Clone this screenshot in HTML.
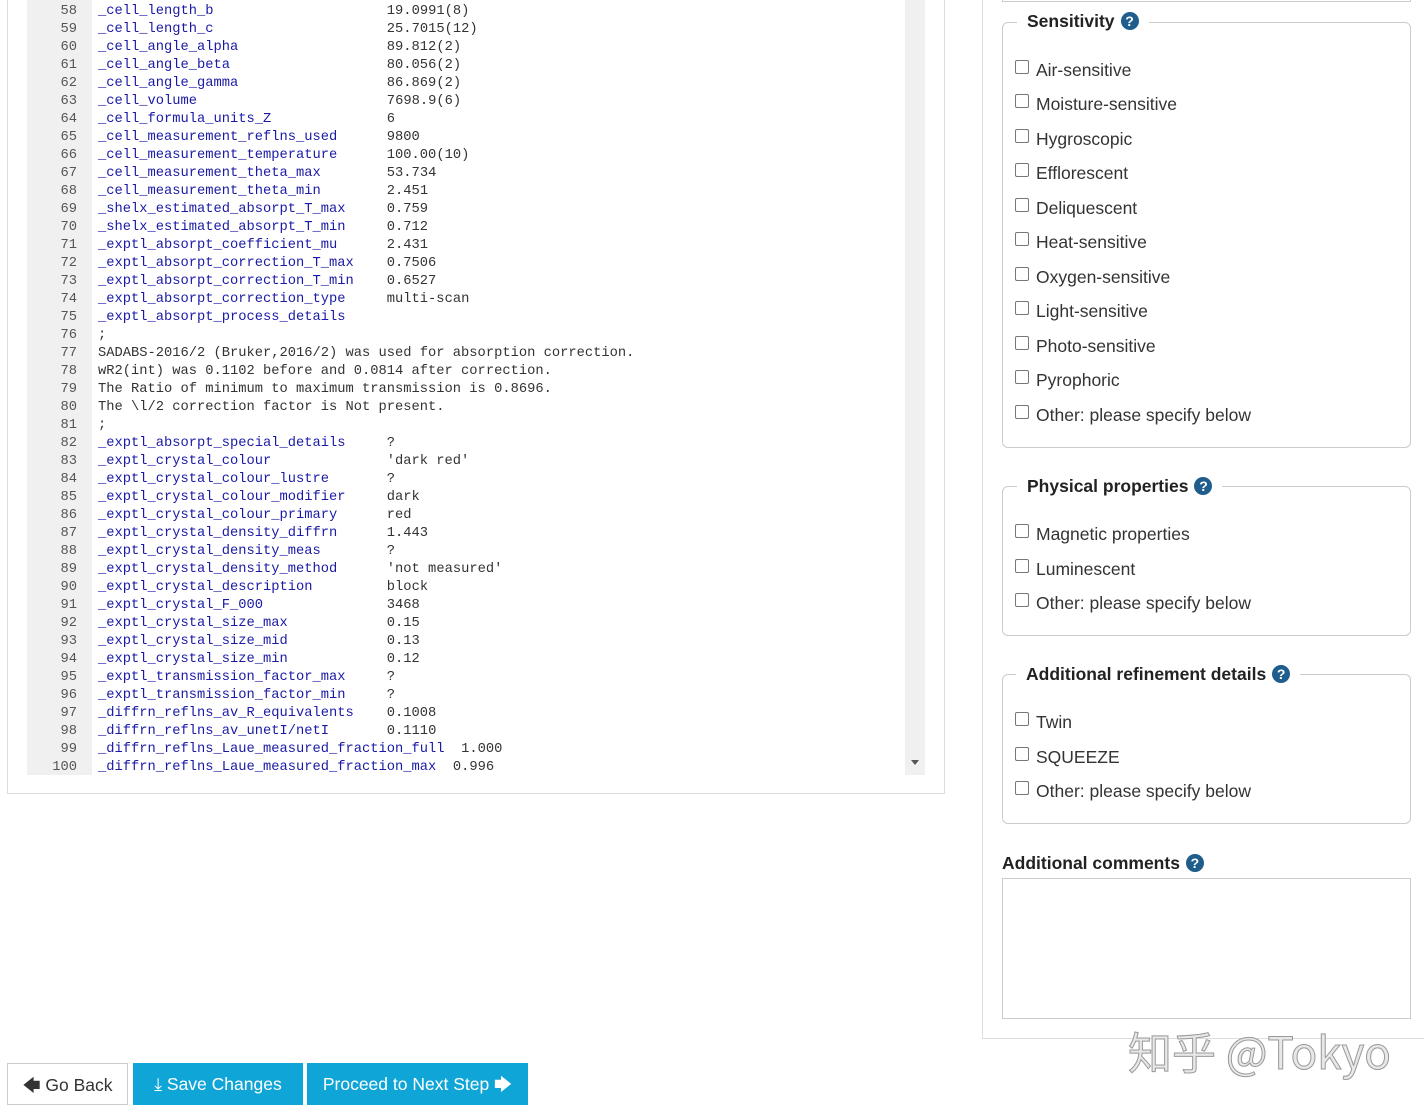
<!DOCTYPE html>
<html><head><meta charset="utf-8"><style>
body{margin:0;width:1424px;height:1113px;background:#fff;position:relative;overflow:hidden;font-family:"Liberation Sans",Arial,sans-serif;color:#333}
.a{position:absolute}
#panel{left:7px;top:-2px;width:938px;height:796px;border:1px solid #ddd;box-sizing:border-box;border-top:none}
#gut{left:27px;top:0;width:65px;height:775px;background:#f0f0f0}
#sb{left:905px;top:0;width:20px;height:775px;background:#f0f0f0}
pre{margin:0;font-family:"Liberation Mono",monospace;font-size:13.75px;line-height:18px}
#nums{left:27px;top:3px;width:50px;text-align:right;color:#555}
#code{left:98px;top:3px;color:#333}
.k{color:#1a1aa6}
#right{left:982px;top:-2px;width:450px;height:1040px;border-left:1px solid #ddd;border-bottom:1px solid #ddd}
.fs{position:absolute;left:1002px;width:409px;border:1px solid #ccc;border-radius:6px;box-sizing:border-box}
.lg{position:absolute;background:#fff;padding:0 10px;font-weight:bold;font-size:17.5px;color:#222;white-space:nowrap}
.q{display:inline-block;width:18px;height:18px;border-radius:50%;background:#1f5d8c;color:#fff;font-size:14px;text-align:center;line-height:18px;vertical-align:1px;margin-left:6px}
.cb{position:absolute;font-size:17.5px;color:#333;white-space:nowrap}
.cb i{display:inline-block;width:12px;height:12px;border:1px solid #777;border-radius:2px;margin-right:7px;vertical-align:2px}
.btn{position:absolute;top:1063px;height:42px;box-sizing:border-box;font-size:17.5px;line-height:42px;text-align:center;color:#fff;background:#0fa5d7;white-space:nowrap}
</style></head><body>
<div id="panel" class="a"></div>
<div id="gut" class="a"></div>
<div id="sb" class="a"><div style="position:absolute;left:6px;top:760px;border-left:4px solid transparent;border-right:4px solid transparent;border-top:5px solid #555"></div></div>
<pre id="nums" class="a">58
59
60
61
62
63
64
65
66
67
68
69
70
71
72
73
74
75
76
77
78
79
80
81
82
83
84
85
86
87
88
89
90
91
92
93
94
95
96
97
98
99
100</pre>
<pre id="code" class="a"><span class="k">_cell_length_b</span>                     19.0991(8)
<span class="k">_cell_length_c</span>                     25.7015(12)
<span class="k">_cell_angle_alpha</span>                  89.812(2)
<span class="k">_cell_angle_beta</span>                   80.056(2)
<span class="k">_cell_angle_gamma</span>                  86.869(2)
<span class="k">_cell_volume</span>                       7698.9(6)
<span class="k">_cell_formula_units_Z</span>              6
<span class="k">_cell_measurement_reflns_used</span>      9800
<span class="k">_cell_measurement_temperature</span>      100.00(10)
<span class="k">_cell_measurement_theta_max</span>        53.734
<span class="k">_cell_measurement_theta_min</span>        2.451
<span class="k">_shelx_estimated_absorpt_T_max</span>     0.759
<span class="k">_shelx_estimated_absorpt_T_min</span>     0.712
<span class="k">_exptl_absorpt_coefficient_mu</span>      2.431
<span class="k">_exptl_absorpt_correction_T_max</span>    0.7506
<span class="k">_exptl_absorpt_correction_T_min</span>    0.6527
<span class="k">_exptl_absorpt_correction_type</span>     multi-scan
<span class="k">_exptl_absorpt_process_details</span>
;
SADABS-2016/2 (Bruker,2016/2) was used for absorption correction.
wR2(int) was 0.1102 before and 0.0814 after correction.
The Ratio of minimum to maximum transmission is 0.8696.
The \l/2 correction factor is Not present.
;
<span class="k">_exptl_absorpt_special_details</span>     ?
<span class="k">_exptl_crystal_colour</span>              'dark red'
<span class="k">_exptl_crystal_colour_lustre</span>       ?
<span class="k">_exptl_crystal_colour_modifier</span>     dark
<span class="k">_exptl_crystal_colour_primary</span>      red
<span class="k">_exptl_crystal_density_diffrn</span>      1.443
<span class="k">_exptl_crystal_density_meas</span>        ?
<span class="k">_exptl_crystal_density_method</span>      'not measured'
<span class="k">_exptl_crystal_description</span>         block
<span class="k">_exptl_crystal_F_000</span>               3468
<span class="k">_exptl_crystal_size_max</span>            0.15
<span class="k">_exptl_crystal_size_mid</span>            0.13
<span class="k">_exptl_crystal_size_min</span>            0.12
<span class="k">_exptl_transmission_factor_max</span>     ?
<span class="k">_exptl_transmission_factor_min</span>     ?
<span class="k">_diffrn_reflns_av_R_equivalents</span>    0.1008
<span class="k">_diffrn_reflns_av_unetI/netI</span>       0.1110
<span class="k">_diffrn_reflns_Laue_measured_fraction_full</span>  1.000
<span class="k">_diffrn_reflns_Laue_measured_fraction_max</span>  0.996</pre>

<div id="right" class="a"></div>
<div class="a" style="left:1002px;top:-2px;width:409px;height:4px;border:1px solid #ccc;border-top:none;box-sizing:border-box"></div>

<div class="fs" style="top:22px;height:426px"></div>
<div class="lg" style="left:1017px;top:11px">Sensitivity<span class="q">?</span></div>
<div class="cb" style="left:1015px;top:60px"><i></i>Air-sensitive</div>
<div class="cb" style="left:1015px;top:94px"><i></i>Moisture-sensitive</div>
<div class="cb" style="left:1015px;top:129px"><i></i>Hygroscopic</div>
<div class="cb" style="left:1015px;top:163px"><i></i>Efflorescent</div>
<div class="cb" style="left:1015px;top:198px"><i></i>Deliquescent</div>
<div class="cb" style="left:1015px;top:232px"><i></i>Heat-sensitive</div>
<div class="cb" style="left:1015px;top:267px"><i></i>Oxygen-sensitive</div>
<div class="cb" style="left:1015px;top:301px"><i></i>Light-sensitive</div>
<div class="cb" style="left:1015px;top:336px"><i></i>Photo-sensitive</div>
<div class="cb" style="left:1015px;top:370px"><i></i>Pyrophoric</div>
<div class="cb" style="left:1015px;top:405px"><i></i>Other: please specify below</div>

<div class="fs" style="top:486px;height:150px"></div>
<div class="lg" style="left:1017px;top:476px">Physical properties<span class="q">?</span></div>
<div class="cb" style="left:1015px;top:524px"><i></i>Magnetic properties</div>
<div class="cb" style="left:1015px;top:559px"><i></i>Luminescent</div>
<div class="cb" style="left:1015px;top:593px"><i></i>Other: please specify below</div>

<div class="fs" style="top:674px;height:150px"></div>
<div class="lg" style="left:1016px;top:664px">Additional refinement details<span class="q">?</span></div>
<div class="cb" style="left:1015px;top:712px"><i></i>Twin</div>
<div class="cb" style="left:1015px;top:747px"><i></i>SQUEEZE</div>
<div class="cb" style="left:1015px;top:781px"><i></i>Other: please specify below</div>

<div class="lg" style="left:992px;top:853px;background:none">Additional comments<span class="q">?</span></div>
<div class="a" style="left:1002px;top:878px;width:409px;height:141px;border:1px solid #ccc;box-sizing:border-box"></div>

<div class="a" style="left:1128px;top:1020px;font-family:'Noto Sans CJK SC',sans-serif;font-size:44px;line-height:60px;color:#e8e8e8;-webkit-text-stroke:1px #999;white-space:nowrap">知乎 @Tokyo</div>

<div class="btn" style="left:7px;width:121px;background:#fff;color:#333;border:1px solid #ccc">🡄 Go Back</div>
<div class="btn" style="left:133px;width:170px">⤓ Save Changes</div>
<div class="btn" style="left:307px;width:221px">Proceed to Next Step 🡆</div>
</body></html>
